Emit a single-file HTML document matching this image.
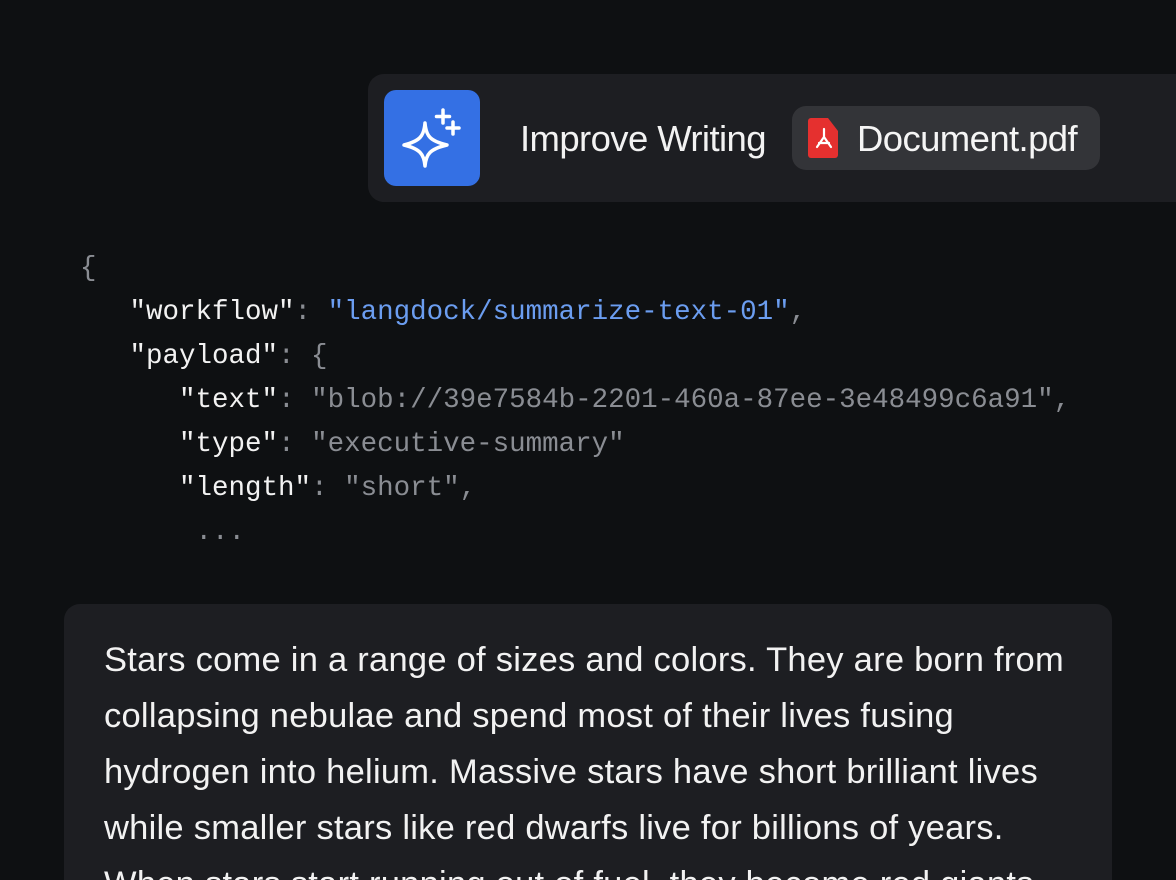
<!DOCTYPE html>
<html><head><meta charset="utf-8"><style>
html,body{margin:0;padding:0;background:#0e1012;width:1176px;height:880px;overflow:hidden;position:relative;font-family:"Liberation Sans",sans-serif}
.bar{position:absolute;left:368px;top:74px;width:830px;height:128px;background:#1d1e22;border-radius:16px}
.icon{position:absolute;left:384px;top:90px;width:96px;height:96px;background:#3470e4;border-radius:12px}
.iw{position:absolute;left:520px;top:117px;font-size:36.5px;color:#f2f2f2;letter-spacing:-0.6px;line-height:44px}
.chip{position:absolute;left:792px;top:106px;width:308px;height:64px;background:#333438;border-radius:14px}
.doc{position:absolute;left:857px;top:117px;font-size:36.5px;color:#f5f5f5;letter-spacing:-0.6px;line-height:44px}
.code{position:absolute;left:80px;top:247px;font-family:"Liberation Mono",monospace;font-size:27.5px;line-height:44px;color:#8a8d93;white-space:pre}
.k{color:#f2f2f2}.b{color:#6b9df0}
.box{position:absolute;left:64px;top:604px;width:1048px;height:300px;background:#1d1e22;border-radius:16px}
.p{position:absolute;left:104px;top:632px;width:1060px;font-size:34.5px;line-height:56px;color:#f2f2f2;letter-spacing:0.25px;white-space:nowrap}
</style></head><body>
<div class="bar"></div>
<div class="icon"><svg width="96" height="96" viewBox="0 0 96 96"><g fill="none" stroke="#fff" stroke-width="3.5" stroke-linejoin="round" stroke-linecap="round"><path d="M41 33 C42 46 46 51 63 55 C46 59 42 64 41 76 C40 64 36 59 20 55 C36 51 40 46 41 33 Z"/><path d="M59 20v13M52.5 26.5h13M69 32v12M63 38h12"/></g></svg></div>
<div class="iw">Improve Writing</div>
<div class="chip"></div>
<svg style="position:absolute;left:808px;top:118px" width="32" height="40" viewBox="0 0 32 40"><path d="M3 0h17l10 13v24a3 3 0 0 1-3 3H3a3 3 0 0 1-3-3V3a3 3 0 0 1 3-3z" fill="#e5302f"/><path d="M16 11v8M16 19l-7 10M16 19l7 10M11 25h10" stroke="#fff" stroke-width="2.2" fill="none" stroke-linecap="round"/></svg>
<div class="doc">Document.pdf</div>
<div class="code">{
   <span class="k">"workflow"</span>: <span class="b">"langdock/summarize-text-01"</span>,
   <span class="k">"payload"</span>: {
      <span class="k">"text"</span>: "blob://39e7584b-2201-460a-87ee-3e48499c6a91",
      <span class="k">"type"</span>: "executive-summary"
      <span class="k">"length"</span>: "short",
       ...</div>
<div class="box"></div>
<div class="p">Stars come in a range of sizes and colors. They are born from<br>collapsing nebulae and spend most of their lives fusing<br>hydrogen into helium. Massive stars have short brilliant lives<br>while smaller stars like red dwarfs live for billions of years.<br>When stars start running out of fuel, they become red giants</div>
</body></html>
